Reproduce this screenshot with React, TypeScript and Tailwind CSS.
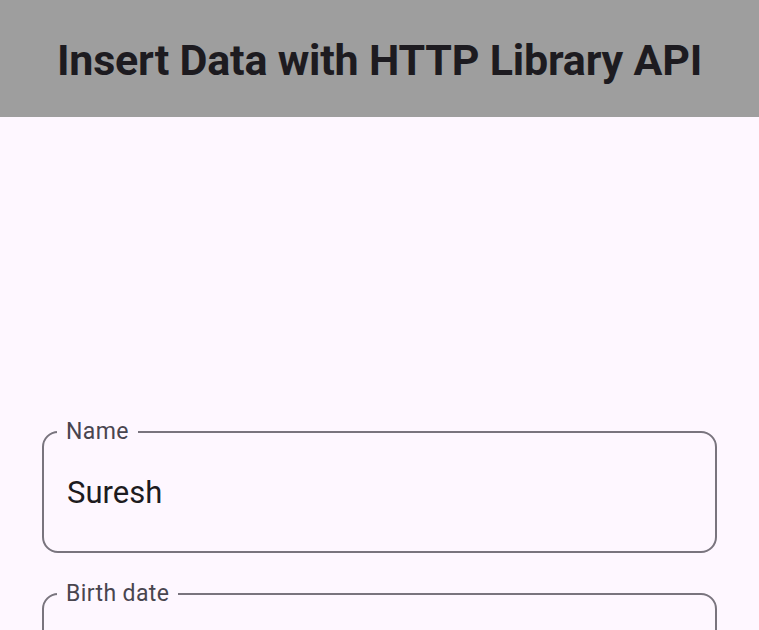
import React, { useState } from 'react';

const Field: React.FC<{ label: string; value: string; onChange: (v: string) => void }> = ({
  label,
  value,
  onChange,
}) => {
  return (
    <fieldset className="rounded-[16px] border-2 border-[#79747e] pl-[23px] pr-[20px] pt-[29px] pb-[40px]">
      <legend className="ml-[-10px] px-[9px] text-[23px] leading-[26px] tracking-[0.4px] text-[#49454f]">
        {label}
      </legend>
      <input
        type="text"
        value={value}
        onChange={(e) => onChange(e.target.value)}
        className="block w-full bg-transparent text-[31px] leading-[37px] text-[#1d1b20] outline-none"
      />
    </fieldset>
  );
};

const App: React.FC = () => {
  const [name, setName] = useState('Suresh');
  const [birth, setBirth] = useState('');

  return (
    <div className="h-[630px] overflow-hidden bg-[#fef7ff] font-['Roboto',sans-serif]">
      <header className="flex h-[117px] items-center justify-center bg-[#9e9e9e] pt-[4px]">
        <h1 className="text-[43px] font-bold tracking-[-0.2px] text-[#1d1b20]">
          Insert Data with HTTP Library API
        </h1>
      </header>
      <main className="flex flex-col gap-[28px] px-[42px] pt-[302px]">
        <Field label="Name" value={name} onChange={setName} />
        <Field label="Birth date" value={birth} onChange={setBirth} />
      </main>
    </div>
  );
};

export default App;
